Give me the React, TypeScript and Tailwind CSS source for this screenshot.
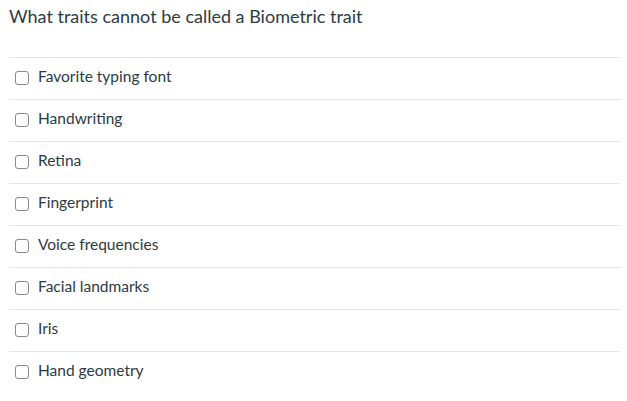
import React from "react";

const items = [
  "Favorite typing font",
  "Handwriting",
  "Retina",
  "Fingerprint",
  "Voice frequencies",
  "Facial landmarks",
  "Iris",
  "Hand geometry",
];

export default function App() {
  return (
    <div
      className="w-[627px] h-[401px] bg-white text-[#2d3b45] overflow-hidden"
      style={{ fontFamily: "Lato, 'Noto Sans', sans-serif" }}
    >
      <div className="pl-[9px] pr-[7px]">
        <div className="pt-[4px] h-[57px] text-[18px] leading-[24px]">
          What traits cannot be called a Biometric trait
        </div>
        <div className="flex flex-col">
          {items.map((t) => (
            <div
              key={t}
              className="h-[42px] border-t border-[#e6e6e6] flex items-center pl-[6px] pb-[5px] gap-[9px]"
            >
              <span className="w-[14px] h-[14px] mt-[3px] border-[1.5px] border-[#8a8a8a] rounded-[3px] bg-white shrink-0" />
              <span className="text-[15.5px] leading-[20px]">{t}</span>
            </div>
          ))}
        </div>
      </div>
    </div>
  );
}
